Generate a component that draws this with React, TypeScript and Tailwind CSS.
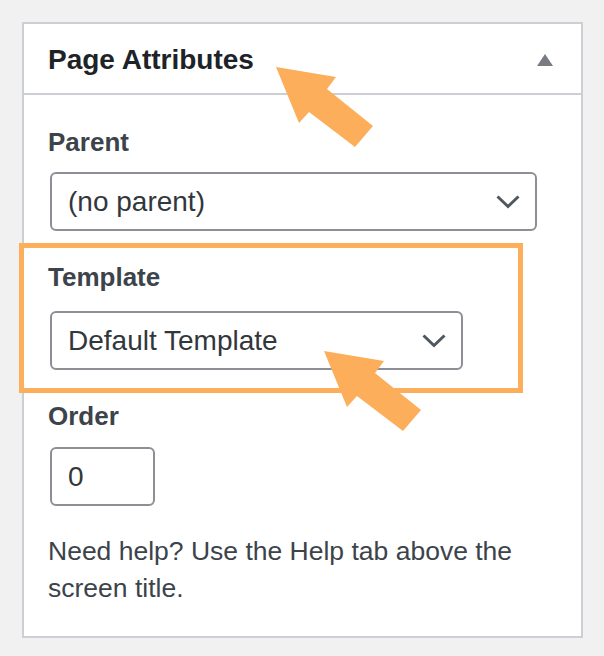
import React from "react";

// Pointer arrow, drawn relative to its tip at (0,0)
const ARROW = "0,0 60,10 51,22 97,59 79,80 33,45 23,56";

const Chevron = () => (
  <svg width="24" height="14" viewBox="0 0 24 14" className="shrink-0">
    <polyline points="1.5,1.5 12,11.5 22.5,1.5" fill="none" stroke="#50575e" strokeWidth="3" />
  </svg>
);

const FakeSelect = ({ value, width }: { value: string; width: string }) => (
  <div
    className={`${width} ml-[2px] h-[59px] rounded-[6px] border-2 border-[#8c8f94] bg-white flex items-center justify-between pl-[16px] pr-[15px] text-[28px] text-[#32373c]`}
  >
    <span>{value}</span>
    <Chevron />
  </div>
);

export default function App() {
  return (
    <div className="relative w-[604px] h-[656px] overflow-hidden bg-[#f1f1f1] pt-[22px] pl-[22px] font-['Liberation_Sans',Arial,sans-serif]">
      <div className="w-[561px] border-2 border-[#ccd0d4] bg-white">
        {/* Header */}
        <div className="h-[71px] flex items-center justify-between pl-[24px] pr-[28px] pt-[3px] border-b-2 border-[#ccd0d4]">
          <h2 className="text-[28px] leading-none font-bold text-[#1d2327]">Page Attributes</h2>
          <svg width="16" height="12" viewBox="0 0 16 12">
            <polygon points="8,0 16,12 0,12" fill="#787c82" />
          </svg>
        </div>

        {/* Body */}
        <div className="px-[24px] pt-[29px] pb-[29px] text-[#3c434a]">
          <p className="text-[26px] leading-[36px] font-bold">Parent</p>
          <div className="mt-[12px]">
            <FakeSelect value="(no parent)" width="w-[487px]" />
          </div>

          <div className="relative mt-[28px]">
            <div className="absolute -left-[29px] -top-[16px] right-[34px] -bottom-[23px] border-[5px] border-[#fcae5b] pointer-events-none" />
            <p className="text-[26px] leading-[36px] font-bold">Template</p>
            <div className="mt-[16px]">
              <FakeSelect value="Default Template" width="w-[413px]" />
            </div>
          </div>

          <p className="mt-[28px] text-[26px] leading-[36px] font-bold">Order</p>
          <div className="mt-[13px] ml-[2px] w-[105px] h-[59px] rounded-[6px] border-2 border-[#8c8f94] flex items-center pl-[16px] text-[28px] text-[#32373c]">
            0
          </div>

          <p className="mt-[27px] text-[26.5px] leading-[37px]">
            Need help? Use the Help tab above the screen title.
          </p>
        </div>
      </div>

      {/* Callout arrows */}
      <svg className="absolute left-0 top-0 pointer-events-none" width="604" height="656" viewBox="0 0 604 656">
        <polygon points={ARROW} transform="translate(276 67)" fill="#fcae5b" />
        <polygon points={ARROW} transform="translate(324 351)" fill="#fcae5b" />
      </svg>
    </div>
  );
}
